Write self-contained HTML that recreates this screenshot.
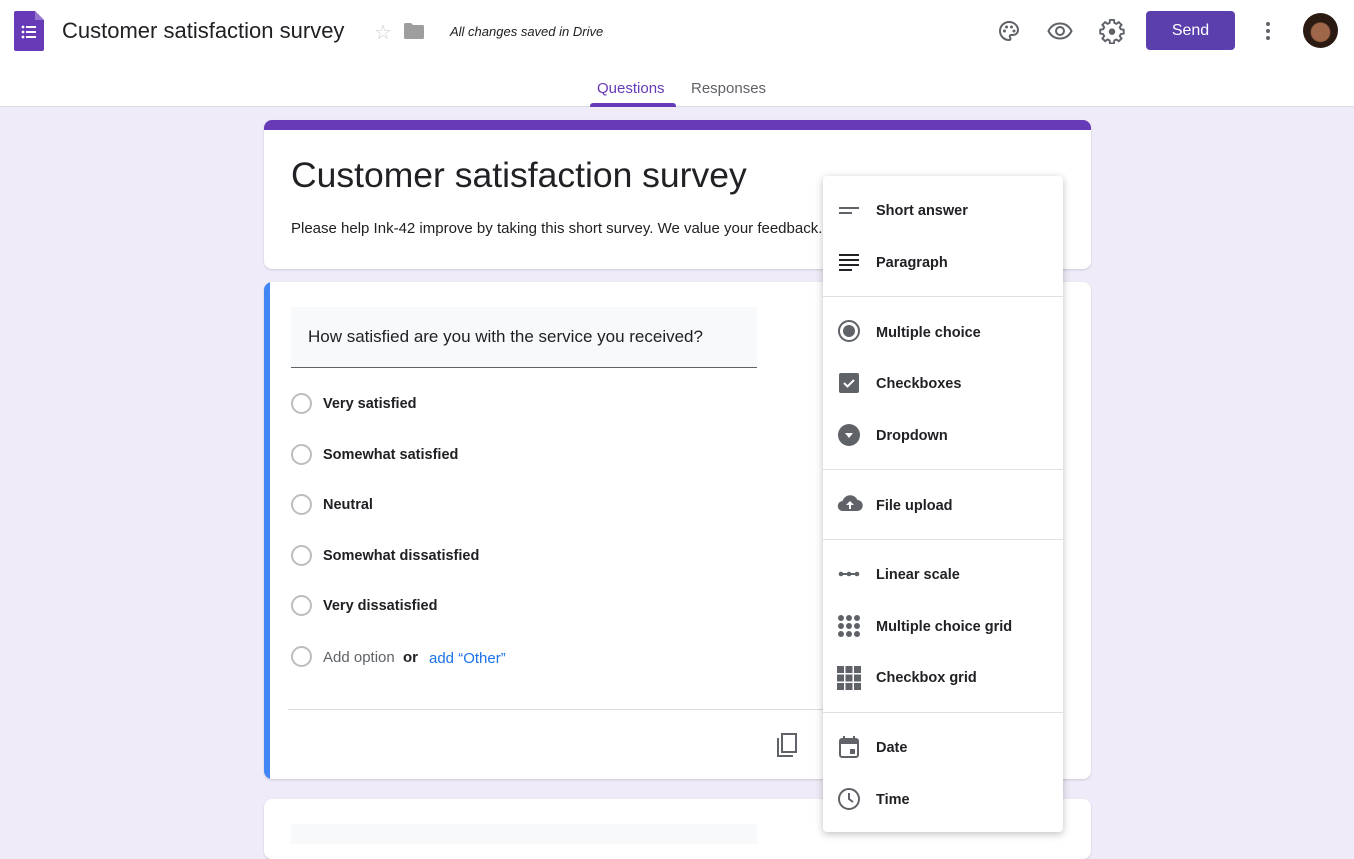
<!DOCTYPE html>
<html><head><style>
*{margin:0;padding:0;box-sizing:border-box}
body{width:1354px;height:840px;overflow:hidden;background:#f0ebf8;font-family:"Liberation Sans",sans-serif;position:relative;color:#202124}
.hdr{position:absolute;left:0;top:0;width:1354px;height:107px;background:#fff;border-bottom:1px solid #dadce0}
.abs{position:absolute}
.card{position:absolute;background:#fff;border-radius:8px;box-shadow:0 1px 2px rgba(0,0,0,.15)}
.opt{position:absolute;left:291px;font-size:14.5px;font-weight:bold;color:#202124}
.rad{position:absolute;left:291px;width:21px;height:21px;border:2px solid #bdbdbd;border-radius:50%}
.menu{position:absolute;left:823px;top:176px;width:240px;height:656px;background:#fff;border-radius:4px;box-shadow:0 2px 8px rgba(0,0,0,.25)}
.mi{position:absolute;left:53px;font-size:14.5px;font-weight:bold;color:#202124;line-height:20px}
.dv{position:absolute;left:0;width:240px;height:1px;background:#e0e0e0}
.ic{position:absolute;left:13px}
</style></head><body>
<div class="hdr"></div>
<svg class="abs" style="left:14px;top:11px" width="30" height="40" viewBox="0 0 30 40"><path d="M2 0h19l9 9v29a2 2 0 0 1-2 2H2a2 2 0 0 1-2-2V2a2 2 0 0 1 2-2z" fill="#673ab7"/><path d="M21 0v9h9z" fill="#9575cd"/><g fill="#fff"><circle cx="9" cy="16" r="1.4"/><circle cx="9" cy="21" r="1.4"/><circle cx="9" cy="26" r="1.4"/><rect x="12" y="15" width="10" height="2"/><rect x="12" y="20" width="10" height="2"/><rect x="12" y="25" width="10" height="2"/></g></svg>
<div class="abs" style="left:62px;top:18px;font-size:22px;color:#202124">Customer satisfaction survey</div>
<div class="abs" style="left:374px;top:20px;font-size:20px;color:#ccc">☆</div>
<svg class="abs" style="left:404px;top:23px" width="20" height="16" viewBox="0 0 20 16"><path d="M0 1.5A1.5 1.5 0 0 1 1.5 0H7l2 2h9.5A1.5 1.5 0 0 1 20 3.5v11a1.5 1.5 0 0 1-1.5 1.5h-17A1.5 1.5 0 0 1 0 14.5z" fill="#9e9e9e"/></svg>
<div class="abs" style="left:450px;top:24px;font-size:13px;font-style:italic;color:#202124">All changes saved in Drive</div>
<svg class="abs" style="left:997px;top:19px" width="24" height="24" viewBox="0 0 24 24"><path d="M12 3a9 9 0 0 0 0 18c1 0 1.5-.7 1.5-1.5 0-.4-.2-.7-.4-1-.2-.3-.4-.6-.4-1 0-.8.7-1.5 1.5-1.5H16a5 5 0 0 0 5-5c0-4.4-4-8-9-8z" fill="none" stroke="#5f6368" stroke-width="2"/><g fill="#5f6368"><circle cx="7.5" cy="12" r="1.5"/><circle cx="9.5" cy="8" r="1.5"/><circle cx="14.5" cy="8" r="1.5"/><circle cx="17" cy="12" r="1.5"/></g></svg>
<svg class="abs" style="left:1047px;top:19px" width="26" height="24" viewBox="0 0 26 24"><path d="M1.5 12C4 7 8 4.5 13 4.5S22 7 24.5 12C22 17 18 19.5 13 19.5S4 17 1.5 12z" fill="none" stroke="#5f6368" stroke-width="2"/><circle cx="13" cy="12" r="4" fill="none" stroke="#5f6368" stroke-width="2"/></svg>
<svg class="abs" style="left:1099px;top:18px" width="26" height="26" viewBox="0 0 24 24"><path d="M10 2h4l.5 3 2 1 2.5-1.8 2.8 2.8L20 9.5l1 2 3 .5v4l-3 .5-1 2 1.8 2.5-2.8 2.8-2.5-1.8-2 1-.5 3h-4l-.5-3-2-1-2.5 1.8-2.8-2.8L4 18.5l-1-2-3-.5v-4l3-.5 1-2L2.2 7 5 4.2 7.5 6l2-1z" transform="scale(.9) translate(1.3 0)" fill="none" stroke="#5f6368" stroke-width="2"/><circle cx="12" cy="12.6" r="3" fill="#5f6368"/></svg>
<div class="abs" style="left:1146px;top:11px;width:89px;height:39px;background:#5a3fad;border-radius:4px;color:#fff;font-size:16px;text-align:center;line-height:39px">Send</div>
<svg class="abs" style="left:1263px;top:21px" width="10" height="20"><g fill="#5f6368"><circle cx="5" cy="3" r="2"/><circle cx="5" cy="10" r="2"/><circle cx="5" cy="17" r="2"/></g></svg>
<div class="abs" style="left:1303px;top:13px;width:35px;height:35px;border-radius:50%;background:radial-gradient(circle at 50% 55%,#a0664a 0 35%,#2a1a12 40%)"></div>
<div class="abs" style="left:597px;top:80px;font-size:15px;color:#673ab7">Questions</div>
<div class="abs" style="left:691px;top:80px;font-size:15px;color:#5f6368">Responses</div>
<div class="abs" style="left:590px;top:103px;width:86px;height:4px;background:#673ab7;border-radius:3px 3px 0 0"></div>

<div class="card" style="left:264px;top:120px;width:827px;height:149px;overflow:hidden"><div style="height:10px;background:#673ab7"></div></div>
<div class="abs" style="left:291px;top:155px;font-size:35.5px;color:#202124">Customer satisfaction survey</div>
<div class="abs" style="left:291px;top:220px;font-size:15px;color:#202124;width:535px;overflow:hidden;white-space:nowrap">Please help Ink-42 improve by taking this short survey. We value your feedback.</div>

<div class="card" style="left:264px;top:282px;width:827px;height:497px;overflow:hidden"><div style="position:absolute;left:0;top:0;width:6px;height:497px;background:#4285f4"></div></div>
<div class="abs" style="left:291px;top:307px;width:466px;height:61px;background:#f8f9fa;border-bottom:1px solid #5f6368"></div>
<div class="abs" style="left:308px;top:327px;font-size:17px;color:#202124">How satisfied are you with the service you received?</div>
<div class="rad" style="top:393px"></div><div class="opt" style="left:323px;top:396px">Very satisfied</div>
<div class="rad" style="top:444px"></div><div class="opt" style="left:323px;top:447px">Somewhat satisfied</div>
<div class="rad" style="top:494px"></div><div class="opt" style="left:323px;top:497px">Neutral</div>
<div class="rad" style="top:545px"></div><div class="opt" style="left:323px;top:548px">Somewhat dissatisfied</div>
<div class="rad" style="top:595px"></div><div class="opt" style="left:323px;top:598px">Very dissatisfied</div>
<div class="rad" style="top:646px"></div>
<div class="abs" style="left:323px;top:649px;font-size:15px;color:#5f6368">Add option</div>
<div class="abs" style="left:403px;top:649px;font-size:15px;font-weight:bold">or</div>
<div class="abs" style="left:429px;top:650px;font-size:15px;color:#1a73e8">add “Other”</div>
<div class="abs" style="left:288px;top:709px;width:540px;height:1px;background:#dadce0"></div>
<svg class="abs" style="left:776px;top:732px" width="22" height="26" viewBox="0 0 22 26"><path d="M2 6v18h15" fill="none" stroke="#5f6368" stroke-width="2"/><rect x="6" y="2" width="14" height="18" fill="none" stroke="#5f6368" stroke-width="2"/></svg>
<div class="card" style="left:264px;top:799px;width:827px;height:60px"></div>
<div class="abs" style="left:291px;top:824px;width:466px;height:20px;background:#f8f9fa"></div>

<div class="menu">
<svg class="ic" style="top:22px" width="26" height="24"><g fill="#5f6368"><rect x="3" y="9" width="20" height="2"/><rect x="3" y="14" width="13" height="2"/></g></svg>
<div class="mi" style="top:25px">Short answer</div>
<svg class="ic" style="top:74px" width="26" height="24"><g fill="#202124"><rect x="3" y="4" width="20" height="2"/><rect x="3" y="9" width="20" height="2"/><rect x="3" y="14" width="20" height="2"/><rect x="3" y="19" width="13" height="2"/></g></svg>
<div class="mi" style="top:77px">Paragraph</div>
<div class="dv" style="top:120px"></div>
<svg class="ic" style="top:143px" width="26" height="24"><circle cx="13" cy="12" r="10" fill="none" stroke="#5f6368" stroke-width="2"/><circle cx="13" cy="12" r="6" fill="#5f6368"/></svg>
<div class="mi" style="top:147px">Multiple choice</div>
<svg class="ic" style="top:195px" width="26" height="24"><rect x="3" y="2" width="20" height="20" rx="2" fill="#5f6368"/><path d="M8 12l3.5 3.5L18 9" fill="none" stroke="#fff" stroke-width="2"/></svg>
<div class="mi" style="top:198px">Checkboxes</div>
<svg class="ic" style="top:247px" width="26" height="24"><circle cx="13" cy="12" r="11" fill="#5f6368"/><path d="M9 10h8l-4 5z" fill="#fff"/></svg>
<div class="mi" style="top:250px">Dropdown</div>
<div class="dv" style="top:293px"></div>
<svg class="ic" style="top:316px" width="28" height="24"><path d="M7 19a5 5 0 0 1-.5-10A8 8 0 0 1 21.5 8 5.5 5.5 0 0 1 21 19z" fill="#5f6368"/><path d="M14 9l-4 4h3v4h2v-4h3z" fill="#fff"/></svg>
<div class="mi" style="top:320px">File upload</div>
<div class="dv" style="top:363px"></div>
<svg class="ic" style="top:386px" width="26" height="24"><g fill="#5f6368"><circle cx="5" cy="12" r="2.3"/><circle cx="13" cy="12" r="2.3"/><circle cx="21" cy="12" r="2.3"/><rect x="5" y="11" width="16" height="2"/></g></svg>
<div class="mi" style="top:389px">Linear scale</div>
<svg class="ic" style="top:437px" width="26" height="26"><g fill="#5f6368"><circle cx="5" cy="5" r="3"/><circle cx="13" cy="5" r="3"/><circle cx="21" cy="5" r="3"/><circle cx="5" cy="13" r="3"/><circle cx="13" cy="13" r="3"/><circle cx="21" cy="13" r="3"/><circle cx="5" cy="21" r="3"/><circle cx="13" cy="21" r="3"/><circle cx="21" cy="21" r="3"/></g></svg>
<div class="mi" style="top:441px">Multiple choice grid</div>
<svg class="ic" style="top:489px" width="26" height="26"><g fill="#5f6368"><rect x="1" y="1" width="7" height="7"/><rect x="9.5" y="1" width="7" height="7"/><rect x="18" y="1" width="7" height="7"/><rect x="1" y="9.5" width="7" height="7"/><rect x="9.5" y="9.5" width="7" height="7"/><rect x="18" y="9.5" width="7" height="7"/><rect x="1" y="18" width="7" height="7"/><rect x="9.5" y="18" width="7" height="7"/><rect x="18" y="18" width="7" height="7"/></g></svg>
<div class="mi" style="top:492px">Checkbox grid</div>
<div class="dv" style="top:536px"></div>
<svg class="ic" style="top:559px" width="26" height="26"><rect x="4" y="4" width="18" height="18" rx="2" fill="none" stroke="#5f6368" stroke-width="2"/><rect x="4" y="4" width="18" height="5" fill="#5f6368"/><rect x="7" y="1" width="2" height="4" fill="#5f6368"/><rect x="17" y="1" width="2" height="4" fill="#5f6368"/><rect x="14" y="14" width="5" height="5" fill="#5f6368"/></svg>
<div class="mi" style="top:562px">Date</div>
<svg class="ic" style="top:610px" width="26" height="26"><circle cx="13" cy="13" r="10" fill="none" stroke="#5f6368" stroke-width="2"/><path d="M13 7v6l4 3" fill="none" stroke="#5f6368" stroke-width="2"/></svg>
<div class="mi" style="top:614px">Time</div>
</div>
</body></html>
